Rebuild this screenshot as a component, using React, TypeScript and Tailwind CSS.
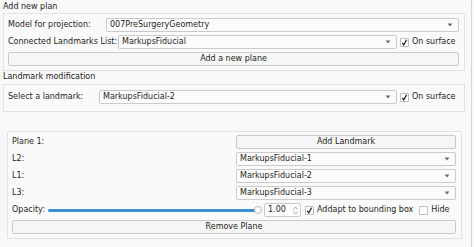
import React from 'react';

const Arrow = () => (
  <svg width="6" height="4" viewBox="0 0 6 4" className="shrink-0">
    <path d="M0.5 0.5 L5.5 0.5 L3 3.5 Z" fill="#6b6e71" />
  </svg>
);

function Combo({ value, className = '' }: { value: string; className?: string }) {
  return (
    <div
      className={`h-[14px] flex items-center justify-between pl-[3px] pr-[5px] bg-[#fcfcfc] border border-[#c9cacb] rounded-[2px] ${className}`}
    >
      <span className="leading-none">{value}</span>
      <Arrow />
    </div>
  );
}

function Check({ checked }: { checked: boolean }) {
  return (
    <div className="w-[9px] h-[9px] bg-white border border-[#bcbdbe] rounded-[1px] flex items-center justify-center shrink-0">
      {checked && (
        <svg width="7" height="7" viewBox="0 0 7 7">
          <path d="M1.2 3.8 L2.8 5.8 L5.6 0.8" stroke="#1d1f20" strokeWidth="1.3" fill="none" />
        </svg>
      )}
    </div>
  );
}

function Button({ label, className = '' }: { label: string; className?: string }) {
  return (
    <div
      className={`h-[14px] flex items-center justify-center bg-[#f6f6f6] border border-[#c9cacb] rounded-[2px] leading-none ${className}`}
    >
      {label}
    </div>
  );
}

export default function App() {
  return (
    <div
      className="w-[474px] h-[247px] flex bg-[#f8f8f8] text-[#1d1f20] text-[8px] whitespace-nowrap overflow-hidden"
      style={{ fontFamily: '"DejaVu Sans", sans-serif' }}
    >
      <div className="w-[471px] flex flex-col">
        {/* Add new plan */}
        <div className="h-[13px] pl-[3px] flex items-center leading-none">Add new plan</div>
        <div className="ml-[3px] w-[462px] h-[58px] border border-[#e1e2e3] bg-[#fafafa] rounded-[1px] pt-[4px] pl-[4px] pr-[5px] flex flex-col gap-[3px]">
          <div className="flex items-center h-[14px]">
            <span className="w-[98px] shrink-0 leading-none">Model for projection:</span>
            <Combo value="007PreSurgeryGeometry" className="flex-1" />
          </div>
          <div className="flex items-center h-[14px]">
            <span className="w-[110px] shrink-0 leading-none">Connected Landmarks List:</span>
            <Combo value="MarkupsFiducial" className="w-[279px]" />
            <div className="ml-[3px] flex items-center gap-[3px]">
              <Check checked />
              <span className="leading-none">On surface</span>
            </div>
          </div>
          <Button label="Add a new plane" />
        </div>

        {/* Landmark modification */}
        <div className="h-[14px] pl-[3px] flex items-center leading-none mt-[-1px]">Landmark modification</div>
        <div className="ml-[3px] w-[462px] h-[28px] border border-[#e1e2e3] bg-[#fafafa] rounded-[1px] pt-[5px] pl-[4px] pr-[5px]">
          <div className="flex items-center h-[14px]">
            <span className="w-[91px] shrink-0 leading-none">Select a landmark:</span>
            <Combo value="MarkupsFiducial-2" className="w-[298px]" />
            <div className="ml-[3px] flex items-center gap-[3px]">
              <Check checked />
              <span className="leading-none">On surface</span>
            </div>
          </div>
        </div>

        {/* Plane */}
        <div className="mt-[19px] ml-[7px] w-[455px] h-[108px] border border-[#e1e2e3] bg-[#fafafa] rounded-[1px] pt-[3px] pl-[4px] pr-[5px] flex flex-col gap-[3px]">
          <div className="flex items-center h-[14px]">
            <span className="w-[224px] shrink-0 leading-none">Plane 1:</span>
            <Button label="Add Landmark" className="flex-1" />
          </div>
          <div className="flex items-center h-[14px]">
            <span className="w-[224px] shrink-0 leading-none">L2:</span>
            <Combo value="MarkupsFiducial-1" className="flex-1" />
          </div>
          <div className="flex items-center h-[14px]">
            <span className="w-[224px] shrink-0 leading-none">L1:</span>
            <Combo value="MarkupsFiducial-2" className="flex-1" />
          </div>
          <div className="flex items-center h-[14px]">
            <span className="w-[224px] shrink-0 leading-none">L3:</span>
            <Combo value="MarkupsFiducial-3" className="flex-1" />
          </div>
          <div className="flex items-center h-[14px]">
            <span className="w-[36px] shrink-0 leading-none">Opacity:</span>
            <div className="relative w-[215px] h-[10px] flex items-center">
              <div className="w-[210px] h-[3px] rounded-full bg-[#3a8fd3]" />
              <div className="absolute left-[206px] top-[1px] w-[8px] h-[8px] rounded-full bg-white border border-[#b5b6b7]" />
            </div>
            <div className="ml-[1px] w-[37px] h-[14px] flex items-center justify-between pl-[3px] pr-[2px] bg-[#fcfcfc] border border-[#c9cacb] rounded-[2px]">
              <span className="leading-none">1.00</span>
              <svg width="5" height="9" viewBox="0 0 5 9">
                <path d="M0.5 3.5 L2.5 1 L4.5 3.5" stroke="#8a8c8e" strokeWidth="0.8" fill="none" />
                <path d="M0.5 5.5 L2.5 8 L4.5 5.5" stroke="#8a8c8e" strokeWidth="0.8" fill="none" />
              </svg>
            </div>
            <div className="ml-[4px] flex items-center gap-[3px]">
              <Check checked />
              <span className="leading-none">Addapt to bounding box</span>
            </div>
            <div className="ml-[6px] flex items-center gap-[3px]">
              <Check checked={false} />
              <span className="leading-none">Hide</span>
            </div>
          </div>
          <Button label="Remove Plane" />
        </div>
      </div>
      <div className="w-[1px] h-full bg-[#d6d7d8]" />
      <div className="flex-1" />
    </div>
  );
}
